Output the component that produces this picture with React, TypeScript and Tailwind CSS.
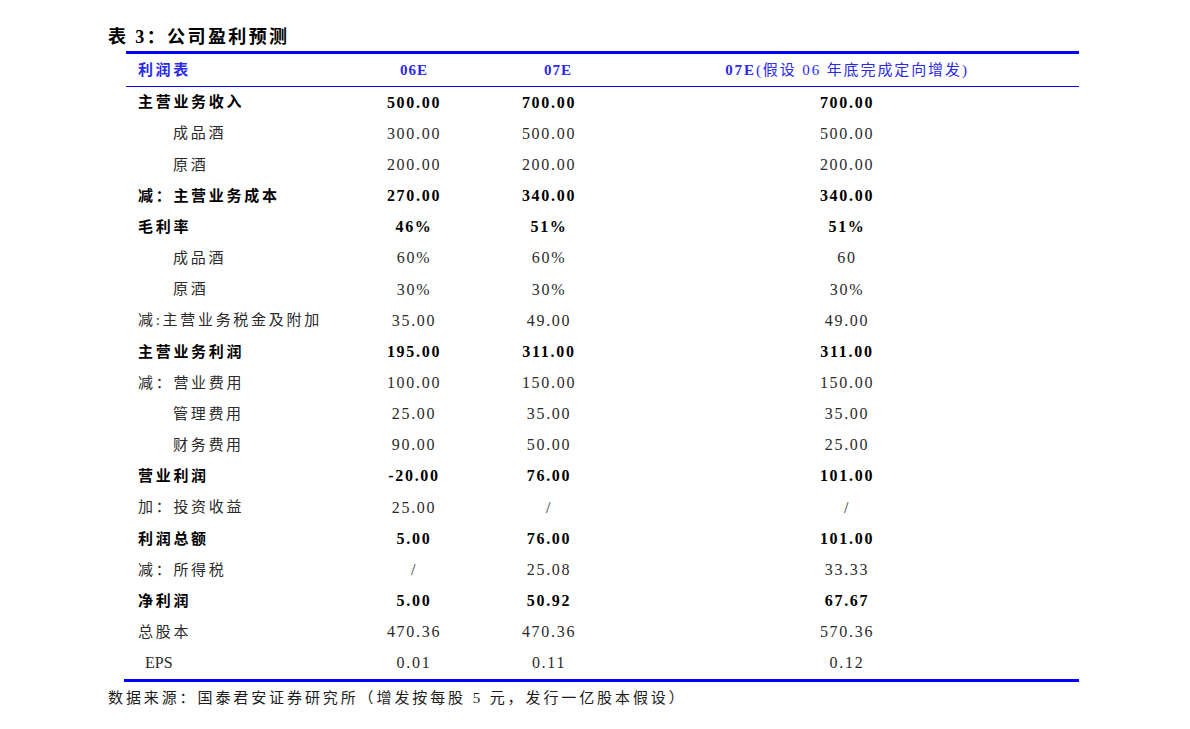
const rows: { label: string; indent?: boolean; bold?: boolean; v: [string, string, string]; latin?: boolean }[] = [
  { label: "主营业务收入", bold: true, v: ["500.00", "700.00", "700.00"] },
  { label: "成品酒", indent: true, v: ["300.00", "500.00", "500.00"] },
  { label: "原酒", indent: true, v: ["200.00", "200.00", "200.00"] },
  { label: "减：主营业务成本", bold: true, v: ["270.00", "340.00", "340.00"] },
  { label: "毛利率", bold: true, v: ["46%", "51%", "51%"] },
  { label: "成品酒", indent: true, v: ["60%", "60%", "60"] },
  { label: "原酒", indent: true, v: ["30%", "30%", "30%"] },
  { label: "减:主营业务税金及附加", v: ["35.00", "49.00", "49.00"] },
  { label: "主营业务利润", bold: true, v: ["195.00", "311.00", "311.00"] },
  { label: "减：营业费用", v: ["100.00", "150.00", "150.00"] },
  { label: "管理费用", indent: true, v: ["25.00", "35.00", "35.00"] },
  { label: "财务费用", indent: true, v: ["90.00", "50.00", "25.00"] },
  { label: "营业利润", bold: true, v: ["-20.00", "76.00", "101.00"] },
  { label: "加：投资收益", v: ["25.00", "/", "/"] },
  { label: "利润总额", bold: true, v: ["5.00", "76.00", "101.00"] },
  { label: "减：所得税", v: ["/", "25.08", "33.33"] },
  { label: "净利润", bold: true, v: ["5.00", "50.92", "67.67"] },
  { label: "总股本", v: ["470.36", "470.36", "570.36"] },
  { label: "EPS", latin: true, v: ["0.01", "0.11", "0.12"] },
];

const cjk = "font-['Liberation_Serif','Noto_Sans_CJK_SC',serif]";

export default function App() {
  return (
    <div className={`w-[1190px] h-[729px] bg-white text-[#1c1c1c] ${cjk}`}>
      <div className="pt-[25px] pl-[108px]">
        <div className="text-[18px] leading-[24px] font-bold tracking-[2.4px] text-black">
          表 3：公司盈利预测
        </div>
      </div>

      <div className="ml-[126px] w-[953px] mt-[2px]">
        <div className="h-[3px] bg-[#0000ff]" />
        <div className="h-[32px] flex items-center text-[#2a2aee] text-[15px] font-bold">
          <div className="w-[219px] pl-[12px] tracking-[2.6px]">利润表</div>
          <div className="w-[138px] text-center tracking-[1px]">06E</div>
          <div className="w-[132px] text-center pl-[18px] tracking-[1px]">07E</div>
          <div className="flex-1 text-center font-normal tracking-[1.9px]">
            <span className="font-bold">07E</span>(假设 06 年底完成定向增发)
          </div>
        </div>
        <div className="h-px bg-[#0000ff]" />

        {rows.map((r, i) => (
          <div
            key={i}
            className={`h-[31.17px] flex items-center text-[15px] ${r.bold ? "font-bold text-black" : "text-[#2a2a2a]"}`}
          >
            <div
              className={`w-[219px] ${r.indent ? "pl-[47px]" : r.latin ? "pl-[19px]" : "pl-[12px]"} ${r.latin ? "text-[16px] tracking-[0px]" : "tracking-[2.7px]"} whitespace-nowrap`}
            >
              {r.label}
            </div>
            <div className="w-[138px] text-center text-[16px] tracking-[1.7px]">{r.v[0]}</div>
            <div className="w-[132px] text-center text-[16px] tracking-[1.7px]">{r.v[1]}</div>
            <div className="flex-1 text-center text-[16px] tracking-[1.7px]">{r.v[2]}</div>
          </div>
        ))}

        <div className="h-[3px] bg-[#0000ff] -ml-[2px]" />
      </div>

      <div className="pl-[108px] mt-[6px] text-[15px] leading-[20px] tracking-[2.9px] text-[#1c1c1c]">
        数据来源：国泰君安证券研究所（增发按每股 5 元，发行一亿股本假设）
      </div>
    </div>
  );
}
